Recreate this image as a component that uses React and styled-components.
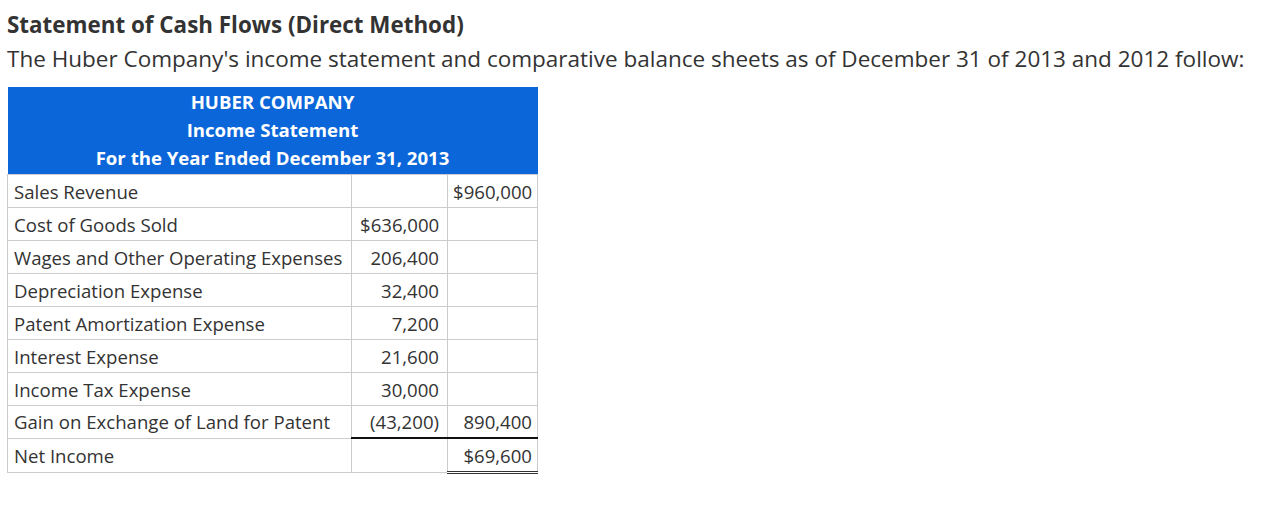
import React from "react";
import styled, { createGlobalStyle } from "styled-components";

const Global = createGlobalStyle`
  body {
    margin: 0;
    padding: 8px 7px;
    background: #ffffff;
    font-family: "Open Sans", "Liberation Sans", sans-serif;
    color: #333333;
  }
`;

const Title = styled.h1`
  margin: 0;
  font-size: 22.4px;
  font-weight: 700;
  line-height: 34px;
  color: #333333;
`;

const Intro = styled.p`
  margin: 0 0 11px;
  font-size: 22.5px;
  line-height: 34px;
  white-space: nowrap;
  color: #333333;
`;

const Table = styled.table`
  border-collapse: collapse;
  table-layout: fixed;
  width: 531px;
  font-size: 18.6px;
`;

const HeadCell = styled.th`
  background: #0b66d9;
  color: #ffffff;
  font-weight: 700;
  font-size: 18.6px;
  line-height: 28px;
  padding: 1px 0 2px;
  text-align: center;
`;

const Row = styled.tr``;

const Cell = styled.td`
  border: 1px solid #cccccc;
  height: ${(p) => (p.$tight ? "31px" : "32px")};
  padding: 0 ${(p) => (p.$num ? (p.$last ? "5px" : "8px") : "6px")};
  text-align: ${(p) => (p.$num ? "right" : "left")};
  white-space: nowrap;
  border-bottom: ${(p) =>
    p.$rule === "single"
      ? "2px solid #111111"
      : p.$rule === "double"
      ? "3px double #333333"
      : "1px solid #cccccc"};
`;

const rows = [
  ["Sales Revenue", "", "$960,000"],
  ["Cost of Goods Sold", "$636,000", ""],
  ["Wages and Other Operating Expenses", "206,400", ""],
  ["Depreciation Expense", "32,400", ""],
  ["Patent Amortization Expense", "7,200", ""],
  ["Interest Expense", "21,600", ""],
  ["Income Tax Expense", "30,000", ""],
  ["Gain on Exchange of Land for Patent", "(43,200)", "890,400", "single"],
  ["Net Income", "", "$69,600", "last"],
];

export default function App() {
  return (
    <>
      <Global />
      <Title>Statement of Cash Flows (Direct Method)</Title>
      <Intro>
        The Huber Company's income statement and comparative balance sheets as
        of December 31 of 2013 and 2012 follow:
      </Intro>
      <Table>
        <colgroup>
          <col style={{ width: 344 }} />
          <col style={{ width: 96 }} />
          <col style={{ width: 90 }} />
        </colgroup>
        <thead>
          <tr>
            <HeadCell colSpan={3}>
              HUBER COMPANY
              <br />
              Income Statement
              <br />
              For the Year Ended December 31, 2013
            </HeadCell>
          </tr>
        </thead>
        <tbody>
          {rows.map(([label, a, b, mark]) => {
            const tight = mark === "single";
            return (
              <Row key={label}>
                <Cell $tight={tight}>{label}</Cell>
                <Cell $num $tight={tight} $rule={tight ? "single" : null}>
                  {a}
                </Cell>
                <Cell
                  $num
                  $last
                  $tight={tight}
                  $rule={tight ? "single" : mark === "last" ? "double" : null}
                >
                  {b}
                </Cell>
              </Row>
            );
          })}
        </tbody>
      </Table>
    </>
  );
}
